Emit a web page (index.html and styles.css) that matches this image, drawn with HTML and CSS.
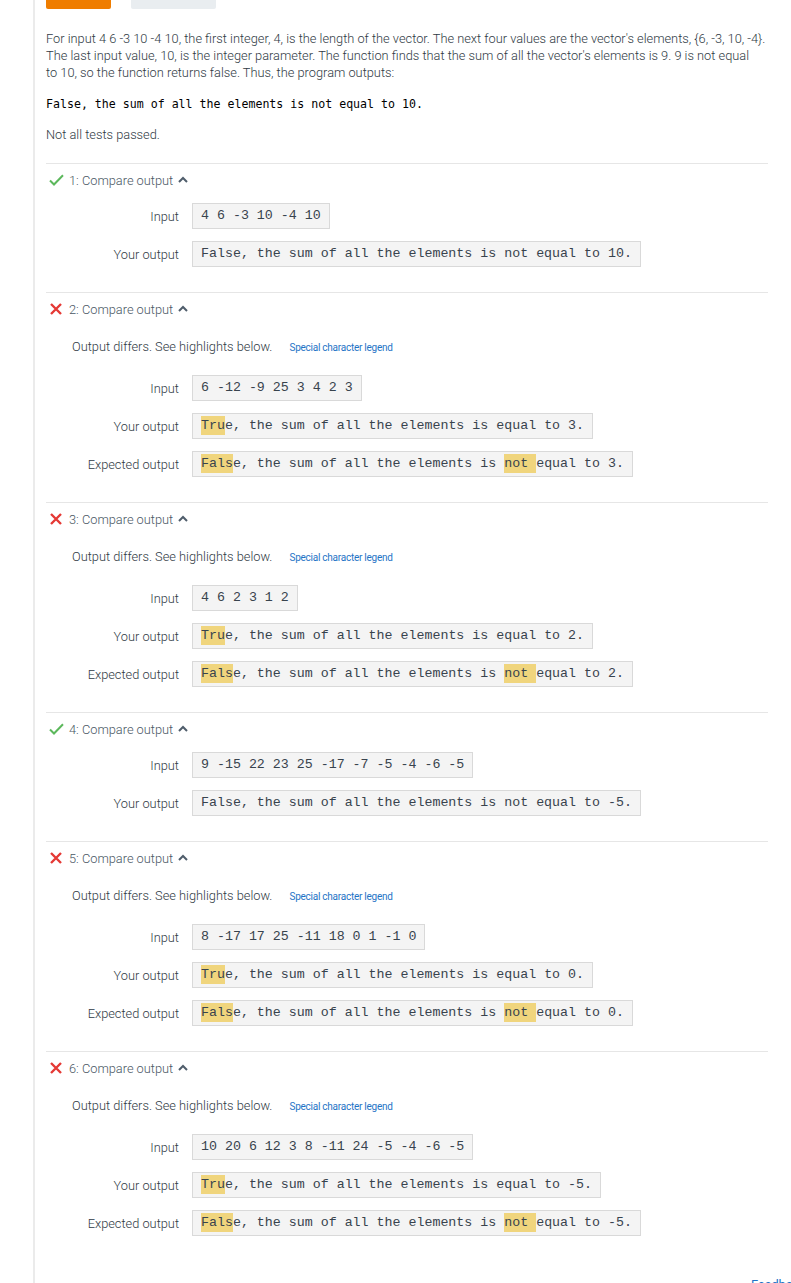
FILE: index.html
```html
<!DOCTYPE html>
<html>
<head>
<meta charset="utf-8">
<link rel="stylesheet" href="styles.css">
</head>
<body>
<div class="page">
  <div class="btnrow">
    <div class="btn btn-orange"></div>
    <div class="btn btn-gray"></div>
  </div>

  <p class="desc">For input 4 6 -3 10 -4 10, the first integer, 4, is the length of the vector. The next four values are the vector's elements, {6, -3, 10, -4}. The last input value, 10, is the integer parameter. The function finds that the sum of all the vector's elements is 9. 9 is not equal to&nbsp;10, so the function returns false. Thus, the program outputs:</p>
  <div class="sample">False, the sum of all the elements is not equal to 10.</div>
  <p class="status">Not all tests passed.</p>

  <div class="test">
    <div class="thead">
      <svg class="ico-ok" width="15" height="12" viewBox="0 0 15 12"><path d="M1 6.5 L5 10.5 L14 1.2" fill="none" stroke="#5cb85c" stroke-width="2"/></svg>
      <span>1: Compare output</span>
      <svg class="caret" width="10" height="7" viewBox="0 0 10 7"><path d="M1 6 L5 2 L9 6" fill="none" stroke="#4f5d6b" stroke-width="2"/></svg>
    </div>
    <div class="rows">
      <div class="lbl">Input</div><div class="box">4 6 -3 10 -4 10</div>
      <div class="lbl">Your output</div><div class="box">False, the sum of all the elements is not equal to 10.</div>
    </div>
  </div>

  <div class="test">
    <div class="thead">
      <svg class="ico-x" width="12" height="12" viewBox="0 0 12 12"><path d="M1 1 L11 11 M11 1 L1 11" fill="none" stroke="#e53935" stroke-width="2.4"/></svg>
      <span>2: Compare output</span>
      <svg class="caret" width="10" height="7" viewBox="0 0 10 7"><path d="M1 6 L5 2 L9 6" fill="none" stroke="#4f5d6b" stroke-width="2"/></svg>
    </div>
    <div class="differs">Output differs. See highlights below. <a class="legend">Special character legend</a></div>
    <div class="rows">
      <div class="lbl">Input</div><div class="box">6 -12 -9 25 3 4 2 3</div>
      <div class="lbl">Your output</div><div class="box"><span class="hl">Tru</span>e, the sum of all the elements is equal to 3.</div>
      <div class="lbl">Expected output</div><div class="box"><span class="hl">Fals</span>e, the sum of all the elements is <span class="hl">not </span>equal to 3.</div>
    </div>
  </div>

  <div class="test">
    <div class="thead">
      <svg class="ico-x" width="12" height="12" viewBox="0 0 12 12"><path d="M1 1 L11 11 M11 1 L1 11" fill="none" stroke="#e53935" stroke-width="2.4"/></svg>
      <span>3: Compare output</span>
      <svg class="caret" width="10" height="7" viewBox="0 0 10 7"><path d="M1 6 L5 2 L9 6" fill="none" stroke="#4f5d6b" stroke-width="2"/></svg>
    </div>
    <div class="differs">Output differs. See highlights below. <a class="legend">Special character legend</a></div>
    <div class="rows">
      <div class="lbl">Input</div><div class="box">4 6 2 3 1 2</div>
      <div class="lbl">Your output</div><div class="box"><span class="hl">Tru</span>e, the sum of all the elements is equal to 2.</div>
      <div class="lbl">Expected output</div><div class="box"><span class="hl">Fals</span>e, the sum of all the elements is <span class="hl">not </span>equal to 2.</div>
    </div>
  </div>

  <div class="test">
    <div class="thead">
      <svg class="ico-ok" width="15" height="12" viewBox="0 0 15 12"><path d="M1 6.5 L5 10.5 L14 1.2" fill="none" stroke="#5cb85c" stroke-width="2"/></svg>
      <span>4: Compare output</span>
      <svg class="caret" width="10" height="7" viewBox="0 0 10 7"><path d="M1 6 L5 2 L9 6" fill="none" stroke="#4f5d6b" stroke-width="2"/></svg>
    </div>
    <div class="rows">
      <div class="lbl">Input</div><div class="box">9 -15 22 23 25 -17 -7 -5 -4 -6 -5</div>
      <div class="lbl">Your output</div><div class="box">False, the sum of all the elements is not equal to -5.</div>
    </div>
  </div>

  <div class="test">
    <div class="thead">
      <svg class="ico-x" width="12" height="12" viewBox="0 0 12 12"><path d="M1 1 L11 11 M11 1 L1 11" fill="none" stroke="#e53935" stroke-width="2.4"/></svg>
      <span>5: Compare output</span>
      <svg class="caret" width="10" height="7" viewBox="0 0 10 7"><path d="M1 6 L5 2 L9 6" fill="none" stroke="#4f5d6b" stroke-width="2"/></svg>
    </div>
    <div class="differs">Output differs. See highlights below. <a class="legend">Special character legend</a></div>
    <div class="rows">
      <div class="lbl">Input</div><div class="box">8 -17 17 25 -11 18 0 1 -1 0</div>
      <div class="lbl">Your output</div><div class="box"><span class="hl">Tru</span>e, the sum of all the elements is equal to 0.</div>
      <div class="lbl">Expected output</div><div class="box"><span class="hl">Fals</span>e, the sum of all the elements is <span class="hl">not </span>equal to 0.</div>
    </div>
  </div>

  <div class="test">
    <div class="thead">
      <svg class="ico-x" width="12" height="12" viewBox="0 0 12 12"><path d="M1 1 L11 11 M11 1 L1 11" fill="none" stroke="#e53935" stroke-width="2.4"/></svg>
      <span>6: Compare output</span>
      <svg class="caret" width="10" height="7" viewBox="0 0 10 7"><path d="M1 6 L5 2 L9 6" fill="none" stroke="#4f5d6b" stroke-width="2"/></svg>
    </div>
    <div class="differs">Output differs. See highlights below. <a class="legend">Special character legend</a></div>
    <div class="rows">
      <div class="lbl">Input</div><div class="box">10 20 6 12 3 8 -11 24 -5 -4 -6 -5</div>
      <div class="lbl">Your output</div><div class="box"><span class="hl">Tru</span>e, the sum of all the elements is equal to -5.</div>
      <div class="lbl">Expected output</div><div class="box"><span class="hl">Fals</span>e, the sum of all the elements is <span class="hl">not </span>equal to -5.</div>
    </div>
  </div>

  <div class="footer"><a class="feedback">Feedback?</a></div>
</div>
</body>
</html>
```

FILE: styles.css
```css
html, body {
  margin: 0;
  padding: 0;
  background: #ffffff;
}

body {
  font-family: Roboto, "Liberation Sans", sans-serif;
  font-size: 12.8px;
  font-weight: 300;
  color: #2f3a44;
  overflow: hidden;
}

.page {
  margin-left: 33px;
  width: 722px;
  padding: 0 23px 0 11px;
  border-left: 2px solid #ebebeb;
  min-height: 1283px;
}

.btnrow {
  display: flex;
  gap: 20px;
}

.btn {
  height: 9px;
  border-radius: 0 0 2px 2px;
}

.btn-orange {
  width: 65px;
  background: #ef7d00;
}

.btn-gray {
  width: 85px;
  background: #e9edf0;
}

.desc {
  margin: 21px 0 0 0;
  line-height: 17px;
}

.sample {
  margin-top: 15px;
  font-family: "DejaVu Sans Mono", monospace;
  font-weight: 400;
  font-size: 11.6px;
  line-height: 16px;
  color: #000;
  white-space: pre;
}

.status {
  margin: 14px 0 0 0;
  line-height: 17px;
}

.test {
  border-top: 1px solid #e6e6e6;
  padding-top: 6px;
  padding-bottom: 25px;
}

.status + .test {
  margin-top: 20px;
}

.thead {
  display: flex;
  align-items: center;
  height: 20px;
  padding-left: 3px;
  color: #4a5764;
}

.ico-ok {
  margin-right: 5px;
}

.ico-x {
  margin-left: 1px;
  margin-right: 7px;
}

.caret {
  margin-left: 5px;
  margin-top: -1px;
}

.differs {
  margin-top: 18px;
  padding-left: 26px;
  line-height: 20px;
}

.legend {
  margin-left: 14px;
  font-size: 10px;
  font-weight: 400;
  letter-spacing: -0.25px;
  color: #1f74c6;
}

.rows {
  display: grid;
  grid-template-columns: 133px auto;
  column-gap: 13px;
  row-gap: 12px;
  justify-items: start;
  align-items: center;
  margin-top: 13px;
}

.differs + .rows {
  margin-top: 17px;
}

.lbl {
  justify-self: end;
}

.box {
  height: 24px;
  line-height: 24px;
  padding: 0 8px;
  border: 1px solid #d9d9d9;
  background: #f4f4f4;
  font-family: "Liberation Mono", "Courier New", monospace;
  font-weight: 400;
  font-size: 13.3px;
  color: #38434d;
  white-space: pre;
}

.hl {
  background: #f0d57d;
  padding: 2px 0;
}

.footer {
  display: flex;
  justify-content: flex-end;
  margin-top: 17px;
  margin-right: -44px;
}

.feedback {
  font-weight: 400;
  color: #1f74c6;
  line-height: 14px;
}
```
